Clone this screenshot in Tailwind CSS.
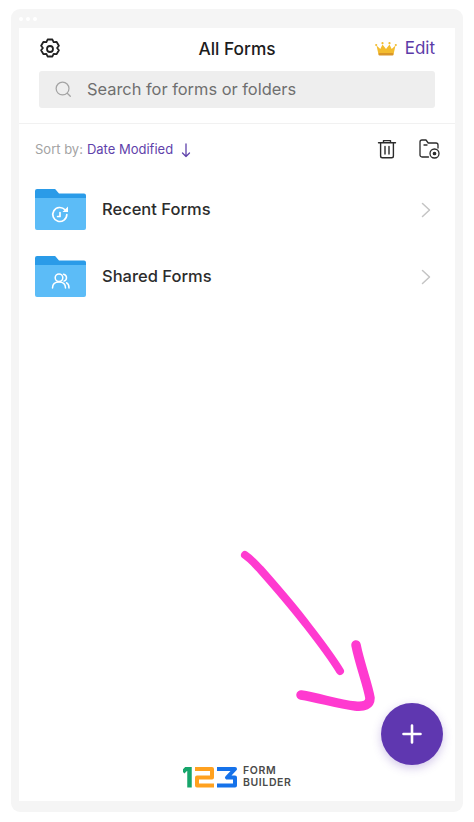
<!DOCTYPE html>
<html lang="en">
<head>
    <meta charset="utf-8"/>
    <meta content="width=device-width, initial-scale=1.0" name="viewport"/>
    <title>All Forms - 123 Form Builder</title>
    <script src="https://cdn.jsdelivr.net/npm/@tailwindcss/browser@4"></script>
</head>
<body class="bg-white font-['Inter',sans-serif] antialiased">

    <div class="w-[474px] h-[822px] pt-[9px] pl-[11px] overflow-hidden">
        <!-- device frame -->
        <div class="relative w-[452px] h-[803px] bg-[#f5f5f5] rounded-[9px] pt-[19px] px-[8px]">
            <div class="absolute left-[8px] top-[8px] flex gap-[3px]">
                <span class="w-[4px] h-[4px] rounded-full bg-white"></span>
                <span class="w-[4px] h-[4px] rounded-full bg-white"></span>
                <span class="w-[4px] h-[4px] rounded-full bg-white"></span>
            </div>

            <div class="relative w-[436px] h-[773px] bg-white flex flex-col">
                <!-- header -->
                <div class="h-[96px] border-b border-[#f1f1f1] px-[20px] shrink-0">
                    <div class="h-[41px] mb-[2px] flex items-center justify-between">
                        <svg class="w-[24px] h-[24px] -ml-[1px]" viewBox="0 0 24 24" fill="none" stroke="#222" stroke-width="1.8" stroke-linejoin="round">
                            <path d="M9.6 2.500h4.800l1.200 2.700 2.900-.4 2.400 4-1.800 2.200 1.800 2.200-2.400 4-2.900-.4-1.200 2.700H9.600l-1.200-2.700-2.900.4-2.400-4 1.800-2.200-1.800-2.200 2.400-4 2.900.4z"/>
                            <circle cx="12" cy="12" r="3"/>
                        </svg>
                        <span class="absolute left-0 right-0 text-center text-[17.3px] font-medium text-[#1c1c1c] pointer-events-none">All Forms</span>
                        <div class="flex items-center gap-[7px] -mr-[0px]">
                            <svg class="w-[24px] h-[15px]" viewBox="0 0 23 15">
                                <path d="M2 4.500 5.800 8 8 3.500 11.500 8 15 3.500 17.200 8 21 4.500 19 13.500H4z" fill="#f3bc2f"/>
                                <rect x="4" y="12" width="15" height="2.600" rx="1" fill="#d9962a"/>
                                <circle cx="1.700" cy="4" r="1.100" fill="#f3bc2f"/>
                                <circle cx="21.300" cy="4" r="1.100" fill="#f3bc2f"/>
                                <circle cx="8" cy="2.200" r="1.100" fill="#f3bc2f"/>
                                <circle cx="15" cy="2.200" r="1.100" fill="#f3bc2f"/>
                            </svg>
                            <span class="text-[17px] text-[#5b3aa8]">Edit</span>
                        </div>
                    </div>
                    <div class="h-[37px] bg-[#eeeeee] rounded-[3px] flex items-center pl-[16px] gap-[15px]">
                        <svg class="w-[17px] h-[17px]" viewBox="0 0 18 18" fill="none" stroke="#a3a3a3" stroke-width="1.300" stroke-linecap="round">
                            <circle cx="8" cy="8" r="6.800"/>
                            <path d="M13 13l3.200 3.200"/>
                        </svg>
                        <span class="text-[16.4px] text-[#6f6f6f]">Search for forms or folders</span>
                    </div>
                </div>

                <!-- sort row -->
                <div class="h-[50px] pt-[2px] flex items-center justify-between pl-[16px] pr-[15px] shrink-0">
                    <div class="flex items-center text-[13px]">
                        <span class="text-[#a3a3a3]">Sort by:</span>
                        <span class="text-[#5f42ab] ml-[4px]">Date Modified</span>
                        <svg class="w-[10px] h-[15px] ml-[8px]" viewBox="0 0 10 15" fill="none" stroke="#5f42ab" stroke-width="1.300" stroke-linecap="round" stroke-linejoin="round">
                            <path d="M5 1v12.500M1.500 10l3.500 3.500 3.500-3.500"/>
                        </svg>
                    </div>
                    <div class="flex items-center gap-[22px] -mt-[2px]">
                        <svg class="w-[20px] h-[20px]" viewBox="0 0 20 20" fill="none" stroke="#2b2b2b" stroke-width="1.400" stroke-linecap="round" stroke-linejoin="round">
                            <path d="M1.500 3.800h17M6.500 3.500V1.600h7v1.900M3.600 4v13a1.800 1.800 0 0 0 1.800 1.800h9.200a1.800 1.800 0 0 0 1.800-1.800V4M8 7.500v7.500M12 7.500v7.500"/>
                        </svg>
                        <svg class="w-[21px] h-[20px]" viewBox="0 0 21 20" fill="none" stroke="#2b2b2b" stroke-width="1.300" stroke-linecap="round" stroke-linejoin="round">
                            <path d="M9.500 18H3a2 2 0 0 1-2-2V3a2 2 0 0 1 2-2h4l2.200 3H17a2 2 0 0 1 2 2v3"/>
                            <path d="M5 6h3"/>
                            <circle cx="15.500" cy="14.500" r="4.500"/>
                            <circle cx="15.500" cy="14.500" r="1.200" fill="#2b2b2b"/>
                        </svg>
                    </div>
                </div>

                <!-- folders -->
                <div class="flex flex-col gap-[26px] pt-[15px] pl-[16px] pr-[24px]">
                    <div class="h-[41px] flex items-center">
                        <svg class="w-[51px] h-[41px] shrink-0" viewBox="0 0 51 41">
                            <path d="M0 10V2a2 2 0 0 1 2-2h17a2 2 0 0 1 2 1l3 3.500h25a2 2 0 0 1 2 2V10z" fill="#2a9be8"/>
                            <path d="M0 9h51v30a2 2 0 0 1-2 2H2a2 2 0 0 1-2-2z" fill="#5cbcf7"/>
                            <g fill="none" stroke="#fff" stroke-width="1.700" stroke-linecap="round" stroke-linejoin="round">
                                <path d="M31.800 25.500a7 7 0 1 1-1.800-4.700"/>
                                <path d="M25 23.500v4h-2.400"/>
                            </g>
                            <path d="M33 17.500v5.500h-5.500z" fill="#fff"/>
                        </svg>
                        <span class="ml-[16px] text-[16.500px] font-[450] text-[#2c2c2c]">Recent Forms</span>
                        <svg class="w-[10px] h-[16px] ml-auto" viewBox="0 0 10 16" fill="none" stroke="#c4c4c4" stroke-width="1.500" stroke-linecap="round" stroke-linejoin="round">
                            <path d="M1.500 1.500 8.500 8l-7 6.500"/>
                        </svg>
                    </div>
                    <div class="h-[41px] flex items-center">
                        <svg class="w-[51px] h-[41px] shrink-0" viewBox="0 0 51 41">
                            <path d="M0 10V2a2 2 0 0 1 2-2h17a2 2 0 0 1 2 1l3 3.500h25a2 2 0 0 1 2 2V10z" fill="#2a9be8"/>
                            <path d="M0 9h51v30a2 2 0 0 1-2 2H2a2 2 0 0 1-2-2z" fill="#5cbcf7"/>
                            <g fill="none" stroke="#fff" stroke-width="1.500" stroke-linecap="round" stroke-linejoin="round">
                                <circle cx="24" cy="21.800" r="3.800"/>
                                <path d="M17.500 32c0-3.700 2.500-6 6.500-6s6.500 2.300 6.500 6"/>
                                <path d="M28.500 18.200c2 .4 3 1.800 3 3.500s-.9 2.900-2.500 3.400"/>
                                <path d="M31.500 26.800c1.700.8 2.500 2.500 2.500 5.200"/>
                            </g>
                        </svg>
                        <span class="ml-[16px] text-[16.500px] font-[450] text-[#2c2c2c]">Shared Forms</span>
                        <svg class="w-[10px] h-[16px] ml-auto" viewBox="0 0 10 16" fill="none" stroke="#c4c4c4" stroke-width="1.500" stroke-linecap="round" stroke-linejoin="round">
                            <path d="M1.500 1.500 8.500 8l-7 6.500"/>
                        </svg>
                    </div>
                </div>

                <!-- hand drawn arrow on top of the screenshot -->
                <svg class="absolute left-[206px] top-[512px] w-[170px] h-[180px]" viewBox="0 0 170 180" fill="none" stroke="#ff3ad0" stroke-linecap="round" stroke-linejoin="round">
                    <path d="M20 15C26 19 30 24 35 29C50 46 64 62 78 80C92 98 104 113 115 131" stroke-width="8"/>
                    <path d="M131 105C135 125 143 145 145 158C145 165 139 167 130 166C112 164 95 158 76 155" stroke-width="9.500"/>
                </svg>

                <!-- add button -->
                <button class="absolute left-[362px] top-[675px] w-[62px] h-[62px] rounded-full bg-[#5f37b0] shadow-[0_3px_10px_rgba(95,55,176,0.28)] flex items-center justify-center">
                    <svg class="w-[20px] h-[20px] -mt-[1px]" viewBox="0 0 20 20" fill="none" stroke="#fff" stroke-width="2.600" stroke-linecap="round">
                        <path d="M10 1.500v17M1.500 10h17"/>
                    </svg>
                </button>

                <!-- logo -->
                <div class="absolute left-[164px] top-[737px] flex items-center gap-[6px]">
                    <svg class="w-[54px] h-[21px]" viewBox="0 0 54 21" fill="none" stroke-width="4">
                        <path d="M0 5 3 2H6.500" stroke="#17a56b"/>
                        <path d="M6.500 0V20.500" stroke="#17a56b" stroke-width="4.500"/>
                        <path d="M12 2H29V10.500H14V18.500H31" stroke="#ffa11f" stroke-linejoin="round"/>
                        <path d="M34 2H52L44 10.500H52V18.500H34" stroke="#1672ea" stroke-linejoin="round"/>
                    </svg>
                    <div class="text-[10.500px] leading-[12px] font-semibold tracking-[0.6px] text-[#4a4a4a]">
                        <div>FORM</div>
                        <div>BUILDER</div>
                    </div>
                </div>
            </div>
        </div>
    </div>

</body>
</html>
